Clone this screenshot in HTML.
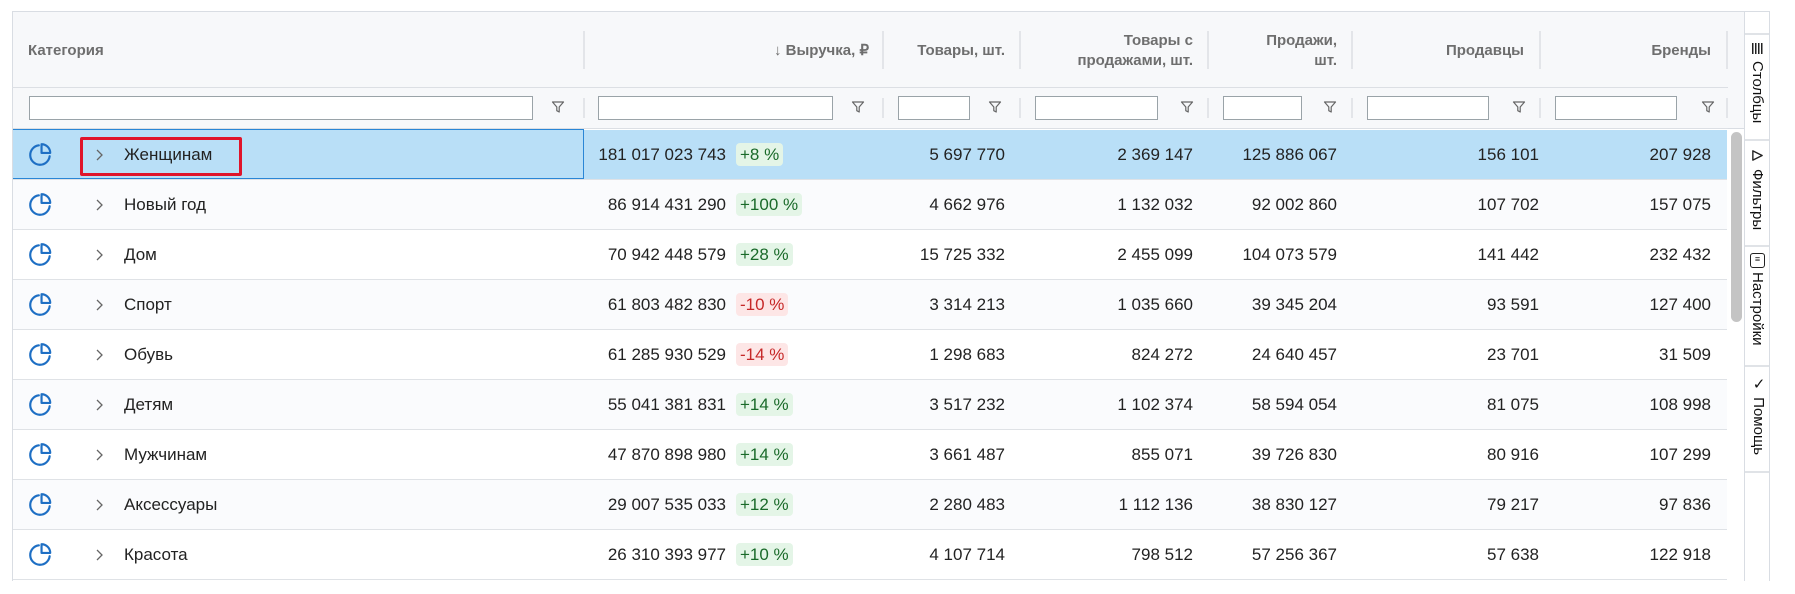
<!DOCTYPE html>
<html><head><meta charset="utf-8"><style>
*{box-sizing:border-box;margin:0;padding:0}
body{width:1795px;height:594px;background:#fff;font-family:"Liberation Sans",sans-serif;position:relative;overflow:hidden;color:#222}
.abs{position:absolute}
.hdr{left:12px;top:11px;width:1732px;height:118px;background:#f7f8fa;border:1px solid #d9dde3;border-right:none}
.hl{position:absolute;height:1px;background:#dcdfe4}
.vs{position:absolute;width:2px;background:#e3e5e9}
.ht{position:absolute;font-size:15px;font-weight:bold;color:#6e6e6e;text-align:right;line-height:20px}
.inp{position:absolute;top:96px;height:24px;background:#fff;border:1px solid #9aa3a8}
.fi{position:absolute;top:100px;width:14px;height:14px}
.row{position:absolute;left:12px;width:1715px;height:50px;border-bottom:1px solid #dfe2e6}
.c{position:absolute;top:0;line-height:49px;font-size:17px;color:#222}
.r{text-align:right}
.b{position:absolute;top:13px;height:23px;line-height:23px;padding:0 4px;border-radius:4px;font-size:17px}
.g{background:#e4f5e7;color:#1a6a2a}
.rd{background:#fde6e6;color:#c62828}
.side{left:1744px;width:26px;border-left:1px solid #d9dde3;border-right:1px solid #d9dde3}
.sec{position:absolute;left:0;width:24px;border-top:2px solid #e0e3e7}
.vt{position:absolute;left:4px;writing-mode:vertical-rl;font-size:15px;color:#111;white-space:nowrap}
</style></head><body>
<div class="abs hdr"></div>
<div class="hl" style="left:12px;top:87px;width:1716px"></div>
<div class="hl" style="left:12px;top:128px;width:1716px"></div>
<div class="vs" style="left:583px;top:31px;height:38px"></div>
<div class="vs" style="left:882px;top:31px;height:38px"></div>
<div class="vs" style="left:1019px;top:31px;height:38px"></div>
<div class="vs" style="left:1207px;top:31px;height:38px"></div>
<div class="vs" style="left:1351px;top:31px;height:38px"></div>
<div class="vs" style="left:1539px;top:31px;height:38px"></div>
<div class="vs" style="left:1726px;top:31px;height:38px"></div>
<div class="vs" style="left:583px;top:98px;height:20px"></div>
<div class="vs" style="left:882px;top:98px;height:20px"></div>
<div class="vs" style="left:1019px;top:98px;height:20px"></div>
<div class="vs" style="left:1207px;top:98px;height:20px"></div>
<div class="vs" style="left:1351px;top:98px;height:20px"></div>
<div class="vs" style="left:1539px;top:98px;height:20px"></div>
<div class="vs" style="left:1726px;top:98px;height:20px"></div>

<div class="ht" style="left:28px;top:41px;text-align:left">Категория</div>
<div class="ht" style="left:600px;width:269px;top:41px">↓ Выручка, ₽</div>
<div class="ht" style="left:890px;width:115px;top:41px">Товары, шт.</div>
<div class="ht" style="left:1025px;width:168px;top:31px">Товары с<br>продажами, шт.</div>
<div class="ht" style="left:1215px;width:122px;top:31px">Продажи,<br>шт.</div>
<div class="ht" style="left:1360px;width:164px;top:41px">Продавцы</div>
<div class="ht" style="left:1550px;width:161px;top:41px">Бренды</div>

<div class="inp" style="left:29px;width:504px"></div>
<div class="inp" style="left:598px;width:235px"></div>
<div class="inp" style="left:898px;width:72px"></div>
<div class="inp" style="left:1035px;width:123px"></div>
<div class="inp" style="left:1223px;width:79px"></div>
<div class="inp" style="left:1367px;width:122px"></div>
<div class="inp" style="left:1555px;width:122px"></div>
<svg width="0" height="0" style="position:absolute"><defs><symbol id="fl" viewBox="0 0 14 14"><path d="M1.5 2h11l-4.3 5v5l-2.4-1.3V7z" fill="none" stroke="#666" stroke-width="1.2" stroke-linejoin="round"/></symbol>
<symbol id="pie" viewBox="0 0 24 24"><path d="M10 4A9 9 0 1 0 20 14" fill="none" stroke="#1e6fc4" stroke-width="2" stroke-linecap="round"/><path d="M12.5 3a8 8 0 0 1 8 8h-8z" fill="none" stroke="#1e6fc4" stroke-width="2" stroke-linejoin="round"/></symbol>
<symbol id="chev" viewBox="0 0 10 14"><path d="M3 2l5 5-5 5" fill="none" stroke="#666" stroke-width="1.3"/></symbol></defs></svg>
<svg class="fi" style="left:551px"><use href="#fl"/></svg>
<svg class="fi" style="left:851px"><use href="#fl"/></svg>
<svg class="fi" style="left:988px"><use href="#fl"/></svg>
<svg class="fi" style="left:1180px"><use href="#fl"/></svg>
<svg class="fi" style="left:1323px"><use href="#fl"/></svg>
<svg class="fi" style="left:1512px"><use href="#fl"/></svg>
<svg class="fi" style="left:1701px"><use href="#fl"/></svg>

<div id="rows"></div>
<div class="abs" style="left:12px;top:129px;width:1px;height:452px;background:#d9dde3"></div>

<div class="abs" style="left:1731px;top:132px;width:11px;height:190px;background:#c4c4c4;border-radius:6px"></div>

<div class="abs side" style="top:11px;height:570px;border-top:1px solid #d9dde3">
 <div class="sec" style="top:21px;height:106px"><div style="position:absolute;left:7px;top:8px;width:11px;height:11px;background:repeating-linear-gradient(90deg,#222 0 1.5px,transparent 1.5px 3px)"></div><div class="vt" style="top:26px">Столбцы</div></div>
 <div class="sec" style="top:127px;height:106px"><svg style="position:absolute;left:6px;top:8px" width="13" height="13" viewBox="0 0 14 14"><path d="M2 2v10l10-5z" fill="none" stroke="#222" stroke-width="1.5" stroke-linejoin="round"/></svg><div class="vt" style="top:28px">Фильтры</div></div>
 <div class="sec" style="top:233px;height:120px"><div style="position:absolute;left:5px;top:6px;width:15px;height:15px;border:1.5px solid #222;border-radius:3px;font-size:9px;line-height:11px;text-align:center">≡</div><div class="vt" style="top:25px">Настройки</div></div>
 <div class="sec" style="top:353px;height:106px"><div class="vt" style="top:8px">✓ Помощь</div></div>
 <div class="sec" style="top:459px;height:110px"></div>
</div>

<script>
const d=[["Женщинам","181 017 023 743","+8 %","5 697 770","2 369 147","125 886 067","156 101","207 928"],
["Новый год","86 914 431 290","+100 %","4 662 976","1 132 032","92 002 860","107 702","157 075"],
["Дом","70 942 448 579","+28 %","15 725 332","2 455 099","104 073 579","141 442","232 432"],
["Спорт","61 803 482 830","-10 %","3 314 213","1 035 660","39 345 204","93 591","127 400"],
["Обувь","61 285 930 529","-14 %","1 298 683","824 272","24 640 457","23 701","31 509"],
["Детям","55 041 381 831","+14 %","3 517 232","1 102 374","58 594 054","81 075","108 998"],
["Мужчинам","47 870 898 980","+14 %","3 661 487","855 071","39 726 830","80 916","107 299"],
["Аксессуары","29 007 535 033","+12 %","2 280 483","1 112 136","38 830 127","79 217","97 836"],
["Красота","26 310 393 977","+10 %","4 107 714","798 512","57 256 367","57 638","122 918"]];
let h="";
d.forEach((r,i)=>{const top=130+i*50;const bg=i==0?"#b9dff7":(i%2?"#fafbfd":"#fff");
const neg=r[2][0]=="-";
h+=`<div class="row" style="top:${top}px;background:${bg}">
<svg style="position:absolute;left:16px;top:11px" width="26" height="26"><use href="#pie"/></svg>
<svg style="position:absolute;left:82px;top:18px" width="10" height="14"><use href="#chev"/></svg>
<div class="c" style="left:112px">${r[0]}</div>
<div class="c r" style="left:560px;width:154px">${r[1]}</div>
<span class="b ${neg?'rd':'g'}" style="left:724px">${r[2]}</span>
<div class="c r" style="left:880px;width:113px">${r[3]}</div>
<div class="c r" style="left:1010px;width:171px">${r[4]}</div>
<div class="c r" style="left:1200px;width:125px">${r[5]}</div>
<div class="c r" style="left:1340px;width:187px">${r[6]}</div>
<div class="c r" style="left:1530px;width:169px">${r[7]}</div></div>`;});
h+=`<div class="abs" style="left:12px;top:129px;width:572px;height:50px;border:1px solid #2a86d6"></div>
<div class="abs" style="left:80px;top:137px;width:162px;height:39px;border:3px solid #e0142a;border-radius:2px"></div>`;
document.getElementById("rows").innerHTML=h;
</script>
</body></html>
